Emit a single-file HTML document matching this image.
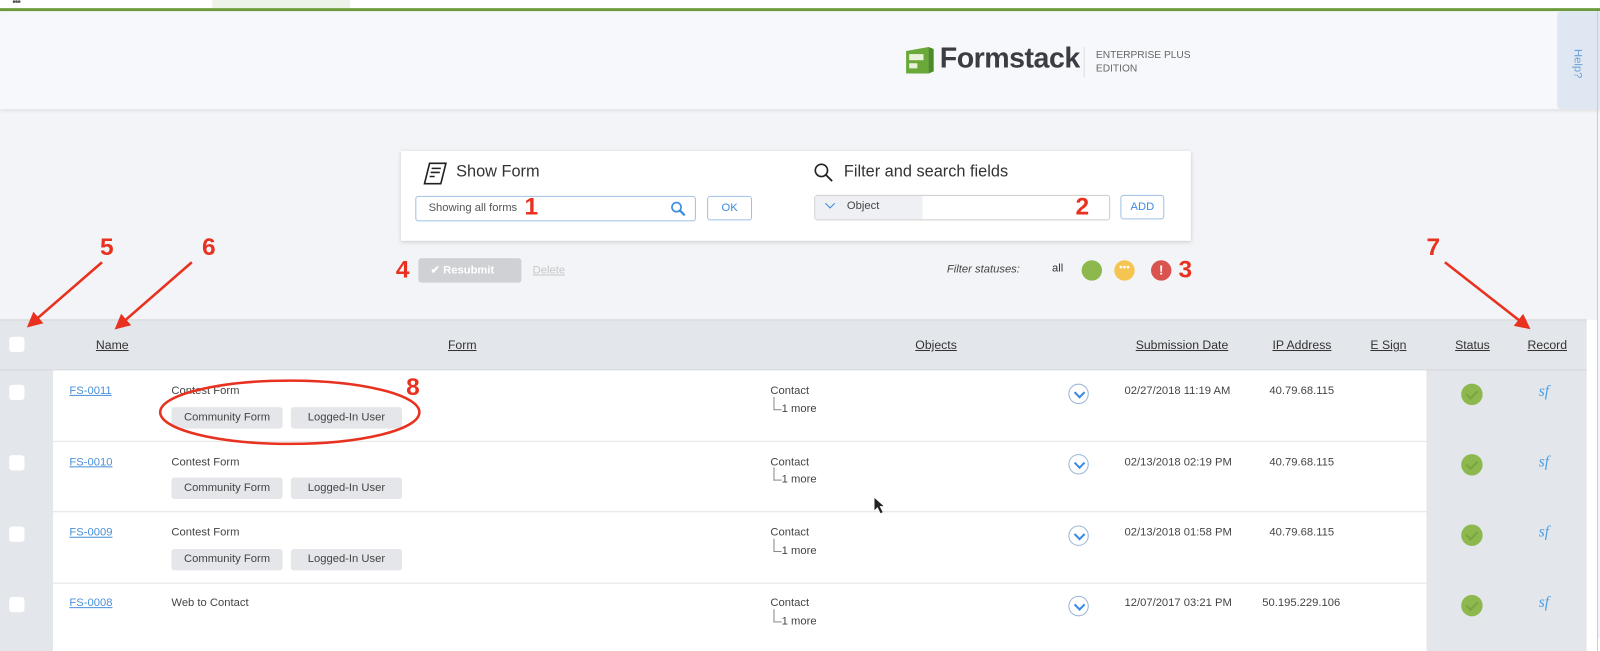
<!DOCTYPE html>
<html><head><meta charset="utf-8"><style>
*{margin:0;padding:0;box-sizing:border-box}
body{width:1600px;height:638px;overflow:hidden;position:relative;font-family:"Liberation Sans",sans-serif;background:#fff;color:#444}
#w{position:absolute;left:0;top:0;width:1568px;height:626px;transform:scale(1.0204);transform-origin:0 0;background:#f3f4f7}
.a{position:absolute}
.u{text-decoration:underline}
.hd{font-size:12px;color:#333;text-decoration:underline}
.lnk{font-size:11px;color:#4a90d9;text-decoration:underline}
.t{font-size:11px;color:#444}
.tag{position:absolute;height:21px;background:#e4e6ea;border-radius:3px;font-size:11px;color:#444;text-align:center;line-height:21px}
.cb{position:absolute;left:9px;width:15px;height:15px;background:#fff;border-radius:3px}
.chk{position:absolute;width:21px;height:21px;border-radius:50%;background:#8cb84e}
.chk:after{content:"";position:absolute;left:7px;top:4px;width:5px;height:9px;border:solid #7aa540;border-width:0 2px 2px 0;transform:rotate(45deg)}
.dd{position:absolute;width:20px;height:20px;border-radius:50%;border:1px solid #9bb6d6;background:#fff}
.dd:after{content:"";position:absolute;left:6px;top:4px;width:6px;height:6px;border:solid #3b8be0;border-width:0 2px 2px 0;transform:rotate(45deg)}
.sf{position:absolute;font-size:15px;font-style:italic;color:#4aa0e6;font-family:"Liberation Serif",serif}
.red{position:absolute;color:#e8321f;font-size:24px;font-weight:bold}
.more{position:absolute;font-size:11px;color:#444}
.more:before{content:"";position:absolute;left:-8px;top:-6px;width:7px;height:12px;border-left:1px solid #888;border-bottom:1px solid #888}
</style></head><body><div id="w">
<div class="a" style="left:0;top:0;width:1568px;height:9px;background:#fff"></div>
<div class="a" style="left:208px;top:0;width:135px;height:8px;background:#eef3ea"></div>
<div class="a" style="left:12px;top:0;font-size:10px;color:#555;line-height:6px;letter-spacing:-1px">•••</div>
<div class="a" style="left:0;top:8px;width:1568px;height:3px;background:#6a9a3a"></div>
<div class="a" style="left:0;top:11px;width:1568px;height:96px;background:#f7f8fb;box-shadow:0 2px 3px #ddd"></div>
<svg class="a" style="left:884px;top:44px" width="34" height="30" viewBox="0 0 34 30"><path d="M4 6 L26 2 L26 28 L4 28Z" fill="#6aa83a"/><rect x="7" y="9" width="14" height="6" fill="#e8f2da"/><rect x="7" y="18" width="8" height="5" fill="#e8f2da"/><path d="M26 2 L31 4 L31 26 L26 28Z" fill="#4d8a28"/></svg>
<div class="a" style="left:921px;top:41px;font-size:28px;font-weight:bold;color:#3a3d42;letter-spacing:-0.5px">Formstack</div>
<div class="a" style="left:1062px;top:46px;width:1px;height:30px;background:#ddd"></div>
<div class="a" style="left:1074px;top:48px;font-size:10px;color:#666;line-height:13px">ENTERPRISE PLUS<br>EDITION</div>
<div class="a" style="left:1526px;top:11px;width:42px;height:96px;background:#dfe8f2;border-radius:4px 0 0 4px"></div>
<div class="a" style="left:1552px;top:48px;font-size:11px;color:#6aa0d8;transform:rotate(90deg);transform-origin:left top">Help?</div>
<div class="a" style="left:1565px;top:11px;width:1px;height:627px;background:#ccc"></div>
<div class="a" style="left:393px;top:148px;width:774px;height:88px;background:#fff;box-shadow:0 1px 4px #ccc"></div>
<svg class="a" style="left:413px;top:158px" width="26" height="24" viewBox="0 0 26 24"><path d="M8 2h16l-5 20H3z" fill="none" stroke="#222" stroke-width="1.6"/><path d="M10 7h9M9 11h9M8 15h5" stroke="#222" stroke-width="1.5"/></svg>
<div class="a" style="left:447px;top:160px;font-size:16px;color:#333">Show Form</div>
<svg class="a" style="left:797px;top:159px" width="22" height="22" viewBox="0 0 22 22"><circle cx="8" cy="8" r="6" fill="none" stroke="#222" stroke-width="1.6"/><path d="M12.5 12.5l6 6" stroke="#222" stroke-width="1.8"/></svg>
<div class="a" style="left:827px;top:160px;font-size:16px;color:#333">Filter and search fields</div>
<div class="a" style="left:407px;top:192px;width:275px;height:25px;border:1px solid #9fc0e4;border-radius:3px;background:#fff"></div>
<div class="a" style="left:420px;top:198px;font-size:11px;color:#555">Showing all forms</div>
<svg class="a" style="left:656px;top:196px" width="18" height="18" viewBox="0 0 18 18"><circle cx="7" cy="7" r="4.5" fill="none" stroke="#3b8be0" stroke-width="1.6"/><path d="M10 10l5 5" stroke="#3b8be0" stroke-width="2.2"/></svg>
<div class="a" style="left:693px;top:192px;width:44px;height:24px;border:1px solid #9fc0e4;border-radius:3px;background:#fff;font-size:11px;color:#3b8be0;text-align:center;line-height:22px">OK</div>
<div class="a" style="left:798px;top:191px;width:290px;height:25px;border:1px solid #ccc;border-radius:3px;background:#fff"></div>
<div class="a" style="left:799px;top:192px;width:105px;height:23px;background:#eef0f3"></div>
<div class="a" style="left:810px;top:196px;width:7px;height:7px;border:solid #3b8be0;border-width:0 1.5px 1.5px 0;transform:rotate(45deg)"></div>
<div class="a" style="left:830px;top:196px;font-size:11px;color:#444">Object</div>
<div class="a" style="left:1098px;top:191px;width:43px;height:24px;border:1px solid #9fc0e4;border-radius:3px;background:#fff;font-size:11px;color:#3b8be0;text-align:center;line-height:22px">ADD</div>
<div class="a" style="left:410px;top:253px;width:101px;height:24px;background:#cfd1d4;border-radius:3px;color:#fff;font-size:11px;font-weight:bold;line-height:24px;padding-left:12px">✔ Resubmit</div>
<div class="a u" style="left:522px;top:259px;font-size:11px;color:#c8c8c8">Delete</div>
<div class="a" style="left:928px;top:258px;font-size:11px;font-style:italic;color:#444">Filter statuses:</div>
<div class="a" style="left:1031px;top:257px;font-size:11px;color:#333">all</div>
<div class="a" style="left:1060px;top:255px;width:20px;height:20px;border-radius:50%;background:#8cb84e"></div>
<div class="a" style="left:1092px;top:255px;width:20px;height:20px;border-radius:50%;background:#f6c451;color:#fff;font-size:10px;text-align:center;line-height:16px">•••</div>
<div class="a" style="left:1128px;top:255px;width:20px;height:20px;border-radius:50%;background:#d9534f;color:#fff;font-size:13px;font-weight:bold;text-align:center;line-height:20px">!</div>
<div class="a" style="left:0;top:313px;width:1565px;height:50px;background:#e3e6ea;border-top:1px solid #d3d6da;border-bottom:1px solid #d3d6da"></div>
<div class="a" style="left:0;top:363px;width:52px;height:275px;background:#e3e6ea"></div>
<div class="a" style="left:52px;top:363px;width:1346px;height:275px;background:#fff"></div>
<div class="a" style="left:1398px;top:363px;width:157px;height:275px;background:#e3e6ea"></div>
<div class="a" style="left:1555px;top:313px;width:10px;height:325px;background:#fff"></div>
<div class="a" style="left:52px;top:432px;width:1346px;height:1px;background:#e3e3e3"></div>
<div class="a" style="left:52px;top:501px;width:1346px;height:1px;background:#e3e3e3"></div>
<div class="a" style="left:52px;top:571px;width:1346px;height:1px;background:#e3e3e3"></div>
<div class="cb" style="top:330px"></div>
<div class="a hd" style="left:94px;top:331px">Name</div>
<div class="a hd" style="left:439px;top:331px">Form</div>
<div class="a hd" style="left:897px;top:331px">Objects</div>
<div class="a hd" style="left:1113px;top:331px">Submission Date</div>
<div class="a hd" style="left:1247px;top:331px">IP Address</div>
<div class="a hd" style="left:1343px;top:331px">E Sign</div>
<div class="a hd" style="left:1426px;top:331px">Status</div>
<div class="a hd" style="left:1497px;top:331px">Record</div>

<div class="cb" style="top:377px"></div><div class="a lnk" style="left:68px;top:377px">FS-0011</div><div class="a t" style="left:168px;top:377px">Contest Form</div>
<div class="tag" style="left:168px;top:399px;width:109px">Community Form</div><div class="tag" style="left:285px;top:399px;width:109px">Logged-In User</div>
<div class="a t" style="left:755px;top:377px">Contact</div><div class="more" style="left:766px;top:395px">1 more</div>
<div class="dd" style="left:1047px;top:376px"></div><div class="a t" style="left:1102px;top:377px">02/27/2018 11:19 AM</div><div class="a t" style="left:1244px;top:377px">40.79.68.115</div>
<div class="chk" style="left:1432px;top:376px"></div><div class="sf" style="left:1508px;top:376px">sf</div>

<div class="cb" style="top:446px"></div><div class="a lnk" style="left:68px;top:447px">FS-0010</div><div class="a t" style="left:168px;top:447px">Contest Form</div>
<div class="tag" style="left:168px;top:468px;width:109px">Community Form</div><div class="tag" style="left:285px;top:468px;width:109px">Logged-In User</div>
<div class="a t" style="left:755px;top:447px">Contact</div><div class="more" style="left:766px;top:464px">1 more</div>
<div class="dd" style="left:1047px;top:445px"></div><div class="a t" style="left:1102px;top:447px">02/13/2018 02:19 PM</div><div class="a t" style="left:1244px;top:447px">40.79.68.115</div>
<div class="chk" style="left:1432px;top:445px"></div><div class="sf" style="left:1508px;top:445px">sf</div>

<div class="cb" style="top:516px"></div><div class="a lnk" style="left:68px;top:516px">FS-0009</div><div class="a t" style="left:168px;top:516px">Contest Form</div>
<div class="tag" style="left:168px;top:538px;width:109px">Community Form</div><div class="tag" style="left:285px;top:538px;width:109px">Logged-In User</div>
<div class="a t" style="left:755px;top:516px">Contact</div><div class="more" style="left:766px;top:534px">1 more</div>
<div class="dd" style="left:1047px;top:515px"></div><div class="a t" style="left:1102px;top:516px">02/13/2018 01:58 PM</div><div class="a t" style="left:1244px;top:516px">40.79.68.115</div>
<div class="chk" style="left:1432px;top:514px"></div><div class="sf" style="left:1508px;top:514px">sf</div>

<div class="cb" style="top:585px"></div><div class="a lnk" style="left:68px;top:585px">FS-0008</div><div class="a t" style="left:168px;top:585px">Web to Contact</div>
<div class="a t" style="left:755px;top:585px">Contact</div><div class="more" style="left:766px;top:603px">1 more</div>
<div class="dd" style="left:1047px;top:584px"></div><div class="a t" style="left:1102px;top:585px">12/07/2017 03:21 PM</div><div class="a t" style="left:1237px;top:585px">50.195.229.106</div>
<div class="chk" style="left:1432px;top:583px"></div><div class="sf" style="left:1508px;top:583px">sf</div>

<div class="red" style="left:514px;top:189px">1</div>
<div class="red" style="left:1054px;top:189px">2</div>
<div class="red" style="left:1155px;top:251px">3</div>
<div class="red" style="left:388px;top:251px">4</div>
<div class="red" style="left:98px;top:229px">5</div>
<div class="red" style="left:198px;top:229px">6</div>
<div class="red" style="left:1398px;top:229px">7</div>
<div class="red" style="left:398px;top:366px">8</div>
<svg class="a" style="left:0;top:0" width="1600" height="638" viewBox="0 0 1600 638">
<defs><marker id="m" markerWidth="6" markerHeight="6" refX="3" refY="3" orient="auto"><path d="M0,0 L6,3 L0,6z" fill="#e8321f"/></marker></defs>
<g stroke="#e8321f" stroke-width="2.5" fill="none">
<path d="M100 257 L32 316" marker-end="url(#m)"/>
<path d="M188 257 L118 318" marker-end="url(#m)"/>
<path d="M1416 257 L1494 318" marker-end="url(#m)"/>
<ellipse cx="284" cy="404" rx="127" ry="31"/>
</g>
<path d="M857 488 L857 500 L860 497 L863 503 L865 502 L862 496 L866 496Z" fill="#222"/>
</svg>
</div></body></html>
